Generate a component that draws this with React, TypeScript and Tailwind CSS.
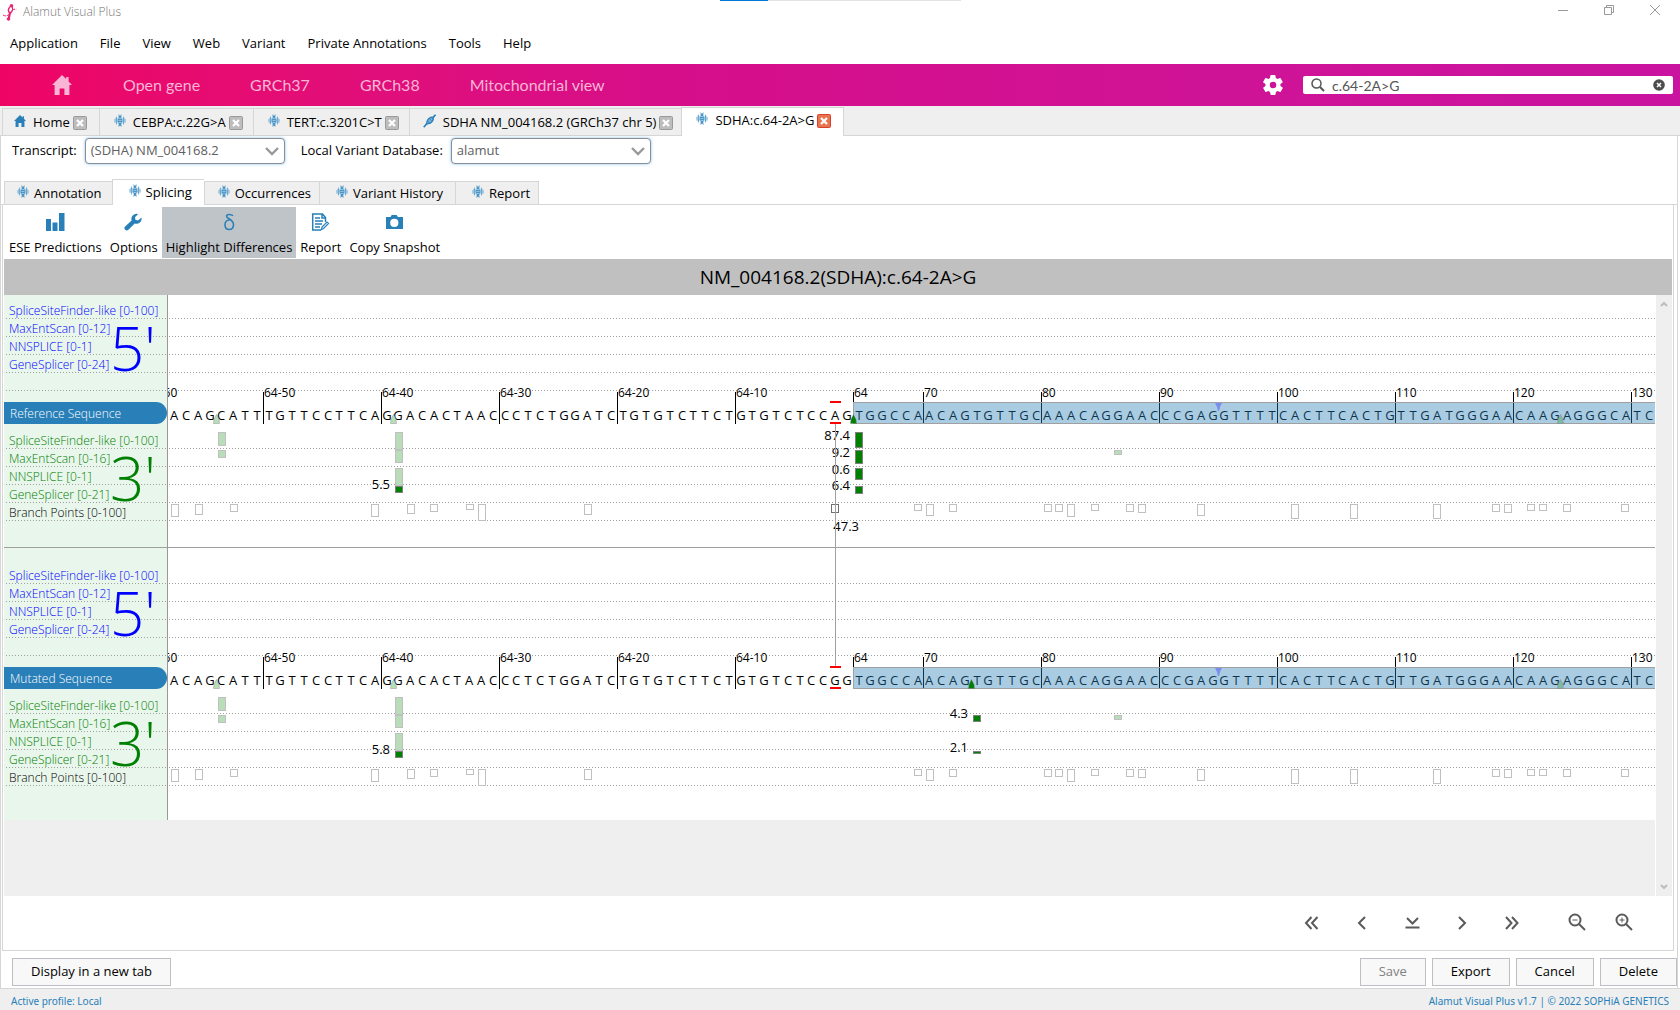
import { useState, type ReactNode } from "react";
import { clsx } from "clsx";

const MENUS = ["Application", "File", "View", "Web", "Variant", "Private Annotations", "Tools", "Help"];
const NAV = ["Open gene", "GRCh37", "GRCh38", "Mitochondrial view"];

/* ---------- sequence data ---------- */

const INTRON = "ACAGCATTTGTTCCTTCAGGACACTAACCCTCTGGATCTGTGTCTTCTGTGTCTCC";
const EXON = "TGGCCAACAGTGTTGCAAACAGGAACCCGAGGTTTTCACTTCACTGTTGATGGGAACAAGAGGGCATC";
const REFERENCE = INTRON + "AG" + EXON;
const MUTATED = INTRON + "GG" + EXON;

const PITCH = 11.8;
const EXON_START = 58;
const MUTATION = 56;

const baseX = (i: number) => Math.floor(i * PITCH + 0.6);

const TICKS = [
  { base: -2, label: "64-60" },
  { base: 8, label: "64-50" },
  { base: 18, label: "64-40" },
  { base: 28, label: "64-30" },
  { base: 38, label: "64-20" },
  { base: 48, label: "64-10" },
  { base: 58, label: "64" },
  { base: 64, label: "70" },
  { base: 74, label: "80" },
  { base: 84, label: "90" },
  { base: 94, label: "100" },
  { base: 104, label: "110" },
  { base: 114, label: "120" },
  { base: 124, label: "130" },
];

const LINES = [23, 41, 59, 77, 95, 153, 171, 189, 207, 225];

type Hit = { x: number; y: number; h: number; strong?: boolean };
type Score = { x: number; y: number; text: string };

const SHARED_HITS: Hit[] = [
  { x: 50, y: 137, h: 14 },
  { x: 50, y: 155, h: 8 },
  { x: 227, y: 137, h: 18 },
  { x: 227, y: 155, h: 13 },
  { x: 227, y: 173, h: 18 },
  { x: 227, y: 191, h: 7, strong: true },
  { x: 946, y: 155, h: 5 },
];

const REFERENCE_HITS: Hit[] = [
  ...SHARED_HITS,
  { x: 687, y: 137, h: 16, strong: true },
  { x: 687, y: 155, h: 14, strong: true },
  { x: 687, y: 173, h: 12, strong: true },
  { x: 687, y: 191, h: 8, strong: true },
];

const MUTATED_HITS: Hit[] = [
  ...SHARED_HITS,
  { x: 805, y: 155, h: 7, strong: true },
  { x: 805, y: 191, h: 3, strong: true },
];

const REFERENCE_SCORES: Score[] = [
  { x: 222, y: 194, text: "5.5" },
  { x: 682, y: 145, text: "87.4" },
  { x: 682, y: 162, text: "9.2" },
  { x: 682, y: 179, text: "0.6" },
  { x: 682, y: 195, text: "6.4" },
  { x: 691, y: 236, text: "47.3" },
];

const MUTATED_SCORES: Score[] = [
  { x: 222, y: 194, text: "5.8" },
  { x: 800, y: 158, text: "4.3" },
  { x: 800, y: 192, text: "2.1" },
];

const BRANCH_POINTS = [
  [3, 12], [27, 10], [62, 7], [203, 12], [239, 9], [262, 7], [298, 5], [310, 16], [416, 10],
  [746, 6], [758, 11], [781, 7], [876, 7], [887, 7], [899, 12], [923, 6], [958, 7], [970, 8],
  [1029, 11], [1123, 14], [1182, 14], [1265, 14], [1324, 7], [1336, 8], [1359, 6], [1371, 6],
  [1395, 7], [1453, 7],
];

/* ---------- icons ---------- */

function VariantIcon() {
  return (
    <svg width="12" height="14" viewBox="0 0 12 14" className="mb-1 shrink-0">
      <path d="M4.5 0 6 2 7.5 0 7.3 3.5 8.3 6.5 7.3 10 7.5 13 6 11.5 4.5 13 4.7 10 3.7 6.5 4.7 3.5z" fill="#4a94c6" />
      <path d="M2.4 2 3.6 5v3L2.4 11 1.4 8V5zM9.6 2l1 3v3l-1 3-1.2-3V5z" fill="#6aa9d2" />
      <path d="M.2 5h1v3.5h-1zM10.8 5h1v3.5h-1z" fill="#9cc6e2" />
      <path d="M5 4.5h2M4.5 6.5h3M5 8.5h2" stroke="#b5d6ea" strokeWidth=".7" />
    </svg>
  );
}

function HelixIcon() {
  return (
    <svg width="13" height="14" viewBox="0 0 13 14" className="mb-1 shrink-0" fill="none" stroke="#2980b9">
      <path d="M3.5 9.5C3 5.5 6.5 3 10.5 2.8c1 3.7-2 7.2-6.5 7.2z" fill="#7db5da" stroke="none" />
      <path d="M.8 13Q2.5 12 3.5 9.5C4 5.5 7 3 10.5 2.8L12.5 1" strokeWidth="1.3" />
      <path d="M.8 13.2Q3 10 4.5 9.8C8.5 9.5 10.5 6.5 10.5 3L12.5.8" strokeWidth="1.3" />
      <path d="m4.500 6.500 2.500 3M6.500 4.500 9 7.500M8.500 3.500l1.500 2" strokeWidth=".9" />
    </svg>
  );
}

function HomeIcon({ className }: { className: string }) {
  return (
    <svg viewBox="0 0 20 20" className={className} fill="currentColor">
      <path d="M10 0 0 10h2.6v10h5v-6.5h4.8V20h5V10H20L16.6 6.4V2h-2.4v2.1z" />
    </svg>
  );
}

function CloseBox({ active }: { active?: boolean }) {
  return (
    <svg width="14" height="14" viewBox="0 0 14 14">
      <rect x=".5" y=".5" width="13" height="13" rx="1" fill={active ? "#e8734f" : "#bdbdbd"} stroke={active ? "#d8402a" : "#9a9a9a"} />
      <path d="m4 4 6 6m0-6-6 6" stroke="#fff" strokeWidth="2.2" />
    </svg>
  );
}

function GearIcon() {
  return (
    <svg width="20" height="20" viewBox="2 2 20 20" fill="#fff">
      <path d="M19.4 13a7.5 7.5 0 0 0 0-2l2.1-1.6a.5.5 0 0 0 .1-.7l-2-3.4a.5.5 0 0 0-.6-.2l-2.5 1a7.3 7.3 0 0 0-1.7-1l-.4-2.6a.5.5 0 0 0-.5-.5h-4a.5.5 0 0 0-.5.4L9 5.1a7.7 7.7 0 0 0-1.7 1l-2.5-1a.5.5 0 0 0-.6.2l-2 3.4a.5.5 0 0 0 .1.7L4.5 11a8 8 0 0 0 0 2l-2.1 1.6a.5.5 0 0 0-.1.7l2 3.4c.1.2.4.3.6.2l2.5-1a7.3 7.3 0 0 0 1.7 1l.4 2.6c0 .3.2.5.5.5h4c.3 0 .5-.2.5-.4l.4-2.7a7.7 7.7 0 0 0 1.7-1l2.5 1c.2.1.5 0 .6-.2l2-3.4a.5.5 0 0 0-.1-.7zM12 15.3a3.3 3.3 0 1 1 0-6.6 3.3 3.3 0 0 1 0 6.6z" />
    </svg>
  );
}

function StrokeIcon({ children, size = 16, width = 2 }: { children: ReactNode; size?: number; width?: number }) {
  return (
    <svg width={size} height={size} viewBox={`0 0 ${size} ${size}`} fill="none" stroke="currentColor" strokeWidth={width}>
      {children}
    </svg>
  );
}

/* ---------- chrome ---------- */

function TitleBar() {
  return (
    <header className="relative flex h-6 shrink-0 items-center bg-white pr-0.5 pl-[3px]">
      <svg width="14" height="17" viewBox="0 0 14 17" fill="none" stroke="#e8216f">
        <path d="M8.5 1.5Q4 5 6 8t-.5 7.5" strokeWidth="1.4" />
        <path d="M8.5 1.5Q11 5.5 8 8.5T5.5 15.5" strokeWidth="1.2" />
        <path d="M0 11q3 2 6-.5l3-4q2-1.8 4.5-1.2" strokeWidth="1" strokeDasharray="3 1" />
        <circle cx="8.5" cy="1.7" r="1.3" fill="#e8216f" />
        <circle cx="5.5" cy="15" r="1.3" fill="#e8216f" />
      </svg>
      <h1 className="ml-1.5 text-[12px] font-light text-[#777]">Alamut Visual Plus</h1>
      <div className="absolute top-0 left-[720px] flex h-px w-[241px] bg-[#e3e3e3]">
        <div className="w-12 bg-[#0078d7]" />
      </div>
      <div className="ml-auto flex self-start text-[#999]">
        <button aria-label="Minimize" className="flex h-5 w-[46px] items-center justify-center">
          <StrokeIcon size={10} width={1}><path d="M0 5.5h10" /></StrokeIcon>
        </button>
        <button aria-label="Restore" className="flex h-5 w-[46px] items-center justify-center">
          <StrokeIcon size={10} width={1}><path d="M.5 2.5h7v7h-7zM2.5 2.5v-2h7v7h-2" /></StrokeIcon>
        </button>
        <button aria-label="Close" className="flex h-5 w-[46px] items-center justify-center">
          <StrokeIcon size={10} width={1}><path d="m0 0 10 10M10 0 0 10" /></StrokeIcon>
        </button>
      </div>
    </header>
  );
}

function PinkBar() {
  return (
    <div className="flex h-[42px] shrink-0 items-center bg-linear-to-r from-[#ee0464] via-[#d60e8a] via-40% to-[#c914a0] pr-[7px] pl-[52px]">
      <button aria-label="Home" className="text-[#f9b5d6]">
        <HomeIcon className="size-5" />
      </button>
      <nav className="ml-[51px] flex gap-[50px] font-[Lato] text-[16px] text-[#f9b5d6]">
        {NAV.map((n) => (
          <a key={n} href="#">{n}</a>
        ))}
      </nav>
      <button aria-label="Settings" className="mr-5 ml-auto">
        <GearIcon />
      </button>
      <label className="flex h-[18px] w-[370px] items-center rounded-xs bg-white px-2 text-[#555]">
        <svg width="14" height="14" viewBox="0 0 14 14" fill="none" stroke="currentColor">
          <circle cx="5.5" cy="5.5" r="4.5" strokeWidth="1.5" />
          <path d="m9 9 4 4" strokeWidth="2" />
        </svg>
        <input aria-label="Search" defaultValue="c.64-2A>G" className="ml-[7px] h-full min-w-0 flex-1 font-[Lato] text-[14px] outline-none" />
        <button aria-label="Clear search">
          <svg width="12" height="12" viewBox="0 0 12 12">
            <circle cx="6" cy="6" r="5.8" fill="#4d4d4d" />
            <path d="m4 4 4 4m0-4-4 4" stroke="#fff" strokeWidth="1.5" />
          </svg>
        </button>
      </label>
    </div>
  );
}

const DOC_TABS = [
  { label: "Home", icon: <HomeIcon className="mb-1 size-3 text-[#2980b9]" />, box: "ml-0.5 pl-[11px] pr-3" },
  { label: "CEBPA:c.22G>A", icon: <VariantIcon />, box: "pl-[14px] pr-2.5" },
  { label: "TERT:c.3201C>T", icon: <VariantIcon />, box: "pl-[14px] pr-2.5" },
  { label: "SDHA NM_004168.2 (GRCh37 chr 5)", icon: <HelixIcon />, box: "pl-[13px] pr-2" },
  { label: "SDHA:c.64-2A>G", icon: <VariantIcon />, box: "pl-[14px] pr-3" },
];

function DocTabs() {
  const [open, setOpen] = useState(4);
  return (
    <div className="flex h-[30px] shrink-0 items-end bg-[#efefef] shadow-[inset_0_-1px_#d6d6d6]">
      {DOC_TABS.map((t, i) => (
        <div
          key={t.label}
          className={clsx(
            "flex items-center border-t border-l border-[#d6d6d6]",
            t.box,
            i === open ? "h-[29px] border-r bg-white pb-0.5" : "h-7"
          )}
        >
          <button className="flex items-center gap-[7px]" onClick={() => setOpen(i)}>
            {t.icon}
            {t.label}
          </button>
          <button aria-label={`Close ${t.label}`} className="ml-[3px]">
            <CloseBox active={i === open} />
          </button>
        </div>
      ))}
    </div>
  );
}

function Picker({ label, value, id }: { label: string; value: string; id: string }) {
  return (
    <div className="flex items-center">
      <label htmlFor={id} className="mr-2">{label}</label>
      <div className="relative">
        <select
          id={id}
          className="h-[26px] w-[200px] appearance-none rounded-sm border border-[#8b8f94] bg-white px-[5px] text-[#606060] shadow-[0_0_3px_#7fbcec]"
        >
          <option>{value}</option>
        </select>
        <svg width="14" height="9" viewBox="0 0 14 9" className="pointer-events-none absolute top-[9px] right-[6px]">
          <path d="m1 1 6 6 6-6" fill="none" stroke="#999" strokeWidth="2.4" />
        </svg>
      </div>
    </div>
  );
}

const VIEW_TABS = [
  { label: "Annotation", box: "pl-3 pr-2.5" },
  { label: "Splicing", box: "pl-4 pr-3" },
  { label: "Occurrences", box: "pl-[13px] pr-2" },
  { label: "Variant History", box: "pl-4 pr-3" },
  { label: "Report", box: "pl-4 pr-2 border-r" },
];

function ViewTabs() {
  const [tab, setTab] = useState("Splicing");
  return (
    <div role="tablist" className="flex h-[26px] shrink-0 items-end pl-[3px] shadow-[inset_0_-1px_#d6d6d6]">
      {VIEW_TABS.map((t) => (
        <button
          key={t.label}
          role="tab"
          aria-selected={t.label === tab}
          onClick={() => setTab(t.label)}
          className={clsx(
            "flex items-center gap-[5px] border-t border-l border-[#d6d6d6]",
            t.box,
            t.label === tab ? "h-[26px] bg-white" : "mb-px h-[23px] bg-[#efefef] pt-0.5"
          )}
        >
          <VariantIcon />
          {t.label}
        </button>
      ))}
    </div>
  );
}

const TOOLS = [
  {
    label: "ESE Predictions",
    icon: <path fill="currentColor" d="M0 6h5v12H0zM6.5 9.5h5V18h-5zM13 0h5.5v18H13z" />,
  },
  {
    label: "Options",
    icon: <path fill="currentColor" d="M17.5 4.5 14 7.5l-2.6-.8L11 4.2 14.2 1A5.2 5.2 0 0 0 7.6 7.5L1.2 13.6a2.2 2.2 0 0 0 3.2 3.2l6.3-6.3a5.2 5.2 0 0 0 6.8-6z" />,
  },
  {
    label: "Highlight Differences",
    icon: (
      <path
        fill="none"
        stroke="currentColor"
        strokeWidth="1.6"
        d="M13 2.8C11.5 1.2 6.5.8 6.5 3.2c0 2.3 7 3.5 7 8.3 0 3-1.8 5-4.3 5S5 14.5 5 11.8 6.8 7 9.5 7"
      />
    ),
  },
  {
    label: "Report",
    icon: (
      <g fill="none" stroke="currentColor" strokeWidth="1.5">
        <path d="M14.5 9V4.5L11.5 1H1.7v16h8.5M11 1v4h3.5" />
        <path d="M4 5h5M4 8h8M4 11h7M4 14h5" strokeWidth="1.3" />
        <path d="m10.5 16.5.5-2.5 5-5 1.5 1.5-5 5z" strokeWidth="1.2" />
      </g>
    ),
  },
  {
    label: "Copy Snapshot",
    icon: (
      <path
        fill="currentColor"
        fillRule="evenodd"
        d="M1 4h4.5l1.2-2h5l1.2 2H18v12H1zM9.3 5.8a4.1 4.1 0 1 0 0 8.2 4.1 4.1 0 0 0 0-8.2z"
      />
    ),
  },
];

function Toolbar() {
  return (
    <div className="flex shrink-0 pt-0.5 pb-px pl-0.5">
      {TOOLS.map((t) => (
        <button
          key={t.label}
          className={clsx(
            "flex h-[51px] flex-col items-center px-1 pt-1.5",
            t.label === "Highlight Differences" && "bg-[#bfc4c8]"
          )}
        >
          <svg width="19" height="18" viewBox="0 0 19 18" className="text-[#2980b9]">{t.icon}</svg>
          <span className="mt-[7px] leading-[18px]">{t.label}</span>
        </button>
      ))}
    </div>
  );
}

/* ---------- splicing view ---------- */

const ROW = "h-[18px] bg-[linear-gradient(to_right,#a0a0a0_1px,transparent_1px)] bg-[length:3px_1px] bg-bottom bg-repeat-x pl-[5px] leading-[19px]";

function TrackLabels({ title, className }: { title: string; className: string }) {
  return (
    <div className={className}>
      <div className="relative text-[#0000ff]">
        <p className={ROW}>SpliceSiteFinder-like [0-100]</p>
        <p className={ROW}>MaxEntScan [0-12]</p>
        <p className={ROW}>NNSPLICE [0-1]</p>
        <p className={ROW}>GeneSplicer [0-24]</p>
        <p className={ROW} />
        <span className="absolute top-[13px] left-[106px] text-[60px] leading-[68px]">5'</span>
      </div>
      <h3 className="mt-[11px] mb-[7px] h-[22px] rounded-r-full bg-[#2980b9] pl-1.5 leading-[23px] text-white">{title}</h3>
      <div className="relative text-[#008000]">
        <p className={ROW}>SpliceSiteFinder-like [0-100]</p>
        <p className={ROW}>MaxEntScan [0-16]</p>
        <p className={ROW}>NNSPLICE [0-1]</p>
        <p className={ROW}>GeneSplicer [0-21]</p>
        <p className={clsx(ROW, "text-black")}>Branch Points [0-100]</p>
        <span className="absolute top-[13px] left-[106px] text-[60px] leading-[68px]">3'</span>
      </div>
    </div>
  );
}

function SiteMark({ x, color }: { x: number; color: string }) {
  return <path d={`M${x + 0.5} 119.5l2.5 5 .5 4h-6l.5-4z`} fill={color} stroke="#808080" strokeOpacity=".4" />;
}

type TrackProps = {
  y: number;
  sequence: string;
  hits: Hit[];
  scores: Score[];
  marks: { x: number; color: string }[];
};

function Tracks({ y, sequence, hits, scores, marks }: TrackProps) {
  const xs = sequence.split("").map((_, i) => baseX(i) + 6);
  const exonX = baseX(EXON_START);
  return (
    <g transform={`translate(0 ${y})`}>
      {LINES.map((l) => (
        <line key={l} x1="1" x2="100%" y1={l + 0.5} y2={l + 0.5} stroke="#a0a0a0" strokeDasharray="1 2" />
      ))}
      <text x={xs.join(" ")} y="125" fontSize="13" textAnchor="middle">{sequence}</text>
      {TICKS.map((t) => (
        <g key={t.label}>
          <line x1={baseX(t.base) + 0.5} x2={baseX(t.base) + 0.5} y1="97" y2={t.label === "64" ? 107 : 129} stroke="#000" />
          <text x={baseX(t.base) + 1} y="102" fontSize="12">{t.label}</text>
        </g>
      ))}
      <rect x={exonX} y="107" width="100%" height="22" fill="#2980b9" fillOpacity=".4" />
      <path d={`M3000 107.5H${exonX + 0.5}V128.5H3000`} fill="none" stroke="#a0a0a0" />
      {marks.map((m) => <SiteMark key={m.x} {...m} />)}
      <path d="M1047 108h7l-2 4-1 4h-1l-1-4z" fill="#7b8df0" />
      <path d={`M${baseX(MUTATION) + 1} 107h11m-11 21h11`} stroke="#f00" strokeWidth="2" />
      {hits.map((h) => (
        <rect
          key={`${h.x}-${h.y}`}
          x={h.x + 0.5}
          y={h.y + 0.5}
          width="7"
          height={h.h - 1}
          fill={h.strong ? "#008000" : "#b9ddb9"}
          stroke={h.strong ? "#808080" : "#c0c0c0"}
        />
      ))}
      {BRANCH_POINTS.map(([x, h]) => (
        <rect key={x} x={x + 0.5} y="209.5" width="7" height={h} fill="none" stroke="#c0c0c0" />
      ))}
      {scores.map((s) => (
        <text key={s.text} x={s.x} y={s.y} fontSize="13" textAnchor="end">{s.text}</text>
      ))}
    </g>
  );
}

function SplicePlot() {
  const light = "#b9ddb9";
  return (
    <svg className="h-[525px] min-w-0 flex-1 bg-white" role="img" aria-label="Splicing predictions">
      <Tracks
        y={0}
        sequence={REFERENCE}
        hits={REFERENCE_HITS}
        scores={REFERENCE_SCORES}
        marks={[{ x: 48, color: light }, { x: 225, color: light }, { x: 685, color: "#008000" }, { x: 1392, color: "#7fb8a4" }]}
      />
      <rect x="663.5" y="209.5" width="7" height="8" fill="none" stroke="#707070" />
      <Tracks
        y={265}
        sequence={MUTATED}
        hits={MUTATED_HITS}
        scores={MUTATED_SCORES}
        marks={[{ x: 48, color: light }, { x: 225, color: light }, { x: 803, color: "#008000" }, { x: 1392, color: "#7fb8a4" }]}
      />
      <line x1="0" x2="100%" y1="252.5" y2="252.5" stroke="#a0a0a0" />
      <line x1="667.5" x2="667.5" y1="129" y2="371" stroke="#a0a0a0" />
    </svg>
  );
}

function SplicingView() {
  return (
    <div className="flex min-h-0 flex-1 bg-white">
      <div className="min-w-0 flex-1 overflow-hidden bg-[#efefef]">
        <div className="flex">
          <div className="w-[164px] shrink-0 border-r border-[#999] bg-[#e9f6ec] text-[12px] font-[350]">
            <TrackLabels title="Reference Sequence" className="border-b border-[#a0a0a0] pt-1.5 pb-[26px]" />
            <TrackLabels title="Mutated Sequence" className="pt-[18px] pb-[34px]" />
          </div>
          <SplicePlot />
        </div>
      </div>
      <div className="ml-px flex w-4 flex-col items-center justify-between bg-[#efefef] py-[5px] text-[#bdbdbd]">
        <StrokeIcon size={8}><path d="m1 6 3-3 3 3" /></StrokeIcon>
        <StrokeIcon size={8}><path d="m1 2 3 3 3-3" /></StrokeIcon>
      </div>
    </div>
  );
}

const PAGER = [
  { label: "First", d: "M7.5 2 2 8l5.5 6M13.5 2 8 8l5.5 6" },
  { label: "Previous", d: "m11 2-6 6 6 6" },
  { label: "Centre", d: "m3 3 5.5 5.5L14 3M1.5 12.5h14" },
  { label: "Next", d: "m5 2 6 6-6 6" },
  { label: "Last", d: "m2 2 5.5 6L2 14M8 2l5.5 6L8 14" },
];

function Pager() {
  return (
    <div className="flex h-[54px] shrink-0 items-center justify-end pr-[39px] text-[#5a5a5a]">
      <div className="flex gap-[34px]">
        {PAGER.map((p) => (
          <button key={p.label} aria-label={p.label}>
            <StrokeIcon><path d={p.d} /></StrokeIcon>
          </button>
        ))}
      </div>
      <div className="mb-0.5 ml-12 flex gap-[29px]">
        <button aria-label="Zoom out">
          <StrokeIcon size={18}><circle cx="7" cy="7" r="5.5" /><path d="m11 11 6 6" /><path d="M4.5 7h5" strokeWidth="1" /></StrokeIcon>
        </button>
        <button aria-label="Zoom in">
          <StrokeIcon size={18}><circle cx="7" cy="7" r="5.5" /><path d="m11 11 6 6" /><path d="M4.5 7h5M7 4.5v5" strokeWidth="1" /></StrokeIcon>
        </button>
      </div>
    </div>
  );
}

const BUTTON = "h-7 border border-[#bcc0c4] bg-[#f8f8f8] px-[18px] disabled:text-[#808080]";

export default function App() {
  return (
    <div className="flex h-screen min-h-[900px] flex-col bg-white font-['Open_Sans','Noto_Sans',sans-serif] text-[13px] text-black">
      <TitleBar />
      <nav className="flex h-10 shrink-0 items-center gap-[22px] pl-2.5">
        {MENUS.map((m) => (
          <button key={m}>{m}</button>
        ))}
      </nav>
      <PinkBar />
      <DocTabs />

      <main className="mr-0.5 flex min-h-0 flex-1 flex-col border-r border-b border-l border-[#d6d6d6]">
        <div className="flex h-[43px] shrink-0 items-start gap-4 pt-0.5 pl-[11px]">
          <Picker id="transcript" label="Transcript:" value="(SDHA) NM_004168.2" />
          <Picker id="database" label="Local Variant Database:" value="alamut" />
        </div>
        <ViewTabs />
        <section className="mr-[3px] ml-px flex min-h-0 flex-1 flex-col border-r border-b border-l border-[#d6d6d6]">
          <Toolbar />
          <div className="mx-px flex min-h-0 flex-1 flex-col">
            <h2 className="flex h-9 shrink-0 items-center justify-center bg-[#c0c0c0] text-[19px]">NM_004168.2(SDHA):c.64-2A&gt;G</h2>
            <SplicingView />
            <Pager />
          </div>
        </section>
        <div className="flex shrink-0 gap-1.5 pt-[7px] pb-0.5 pl-[11px]">
          <button className={clsx(BUTTON, "mr-auto")}>Display in a new tab</button>
          <button className={BUTTON} disabled>Save</button>
          <button className={BUTTON}>Export</button>
          <button className={BUTTON}>Cancel</button>
          <button className={BUTTON}>Delete</button>
        </div>
      </main>

      <footer className="-mt-px flex h-[22px] shrink-0 items-center justify-between border-t border-[#d6d6d6] bg-[#efefef] pt-1 pr-[11px] pl-[11px] font-['Noto_Sans'] text-[10px] text-[#2980b9]">
        <span>Active profile: Local</span>
        <span>Alamut Visual Plus v1.7 | © 2022 SOPHiA GENETICS</span>
      </footer>
    </div>
  );
}
